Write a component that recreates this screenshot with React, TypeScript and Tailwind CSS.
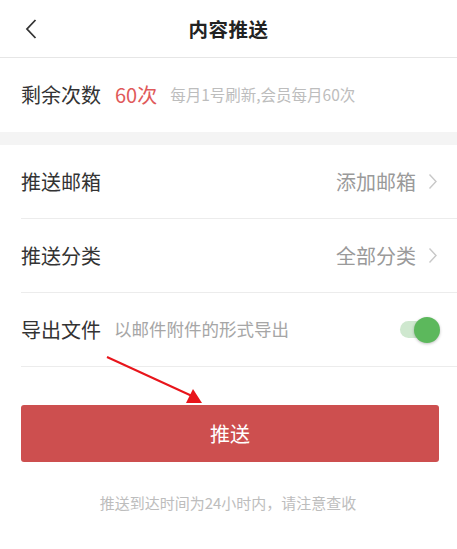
import React from "react";

const font = { fontFamily: '"Noto Sans CJK SC", "Noto Sans", sans-serif' };

function Chevron() {
  return (
    <svg width="10" height="17" viewBox="0 0 10 17" className="ml-[12px]">
      <path d="M1.5 1.5 L8 8.5 L1.5 15.5" fill="none" stroke="#c8c8c8" strokeWidth="1.4" />
    </svg>
  );
}

export default function App() {
  return (
    <div className="relative w-[457px] h-[549px] bg-white overflow-hidden" style={font}>
      {/* header */}
      <div className="h-[58px] border-b border-[#e6e6e6] grid grid-cols-[1fr_auto_1fr] items-center">
        <div className="pl-[24px] flex items-center">
          <svg width="14" height="22" viewBox="0 0 14 22">
            <path d="M11.5 2 L3 11 L11.5 20" fill="none" stroke="#333" strokeWidth="1.8" />
          </svg>
        </div>
        <div className="text-[19.5px] font-bold text-[#222] tracking-[0.5px]">内容推送</div>
        <div />
      </div>

      {/* remaining count */}
      <div className="h-[74px] flex items-center pl-[21px]">
        <span className="text-[20px] text-[#333]">剩余次数</span>
        <span className="text-[20px] text-[#e05a5a] ml-[14px]">60次</span>
        <span className="text-[15.5px] text-[#bdbdbd] ml-[13px]">每月1号刷新,会员每月60次</span>
      </div>

      <div className="h-[13px] bg-[#f4f4f4]" />

      {/* rows */}
      <div className="ml-[21px]">
        <div className="h-[74px] border-b border-[#ececec] flex items-center justify-between pr-[19px]">
          <span className="text-[20px] text-[#333]">推送邮箱</span>
          <div className="flex items-center">
            <span className="text-[20px] text-[#9a9a9a]">添加邮箱</span>
            <Chevron />
          </div>
        </div>
        <div className="h-[74px] border-b border-[#ececec] flex items-center justify-between pr-[19px]">
          <span className="text-[20px] text-[#333]">推送分类</span>
          <div className="flex items-center">
            <span className="text-[20px] text-[#9a9a9a]">全部分类</span>
            <Chevron />
          </div>
        </div>
        <div className="h-[74px] border-b border-[#ececec] flex items-center justify-between pr-[17px]">
          <div className="flex items-center">
            <span className="text-[20px] text-[#333]">导出文件</span>
            <span className="text-[17.5px] text-[#a6a6a6] ml-[13px]">以邮件附件的形式导出</span>
          </div>
          <div className="relative w-[40px] h-[26px] flex items-center">
            <div className="w-[36px] h-[17px] rounded-full bg-[#cfe8cf]" />
            <div className="absolute right-0 top-0 w-[26px] h-[26px] rounded-full bg-[#5cb85c] shadow-[0_1px_3px_rgba(0,0,0,0.25)]" />
          </div>
        </div>
      </div>

      {/* button */}
      <div className="mt-[38px] ml-[21px] w-[418px] h-[57px] rounded-[3px] bg-[#cd4f4f] flex items-center justify-center">
        <span className="text-[20px] text-white">推送</span>
      </div>

      <div className="mt-[30px] text-center text-[15px] text-[#bdbdbd] pr-[1px]">
        推送到达时间为24小时内，请注意查收
      </div>

      {/* red annotation arrow */}
      <svg className="absolute left-0 top-0 pointer-events-none" width="457" height="549" viewBox="0 0 457 549">
        <line x1="107" y1="357" x2="192" y2="396" stroke="#e8151b" strokeWidth="2" />
        <polygon points="202,403 186,403 193,389" fill="#e8151b" />
      </svg>
    </div>
  );
}
